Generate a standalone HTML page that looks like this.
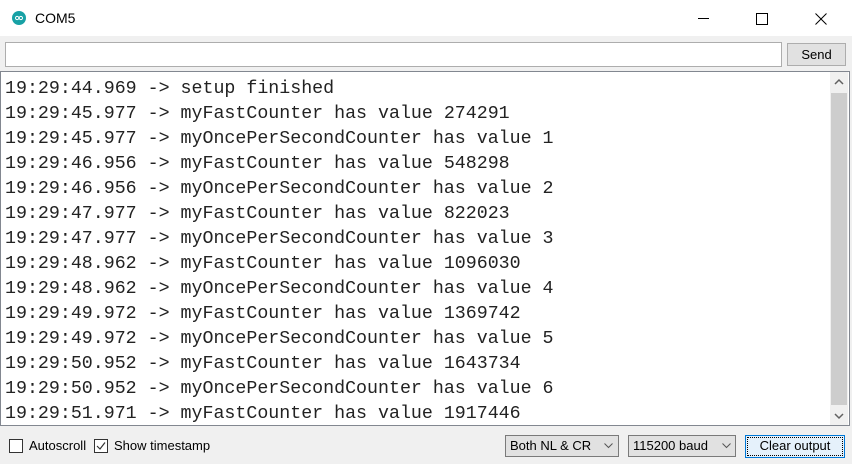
<!DOCTYPE html><html><head><style>
body{margin:0;width:852px;height:464px;overflow:hidden;background:#f0f0f0;font-family:"Liberation Sans",sans-serif;position:relative}
.a{position:absolute}
.t{left:0;top:0;width:852px;height:36px;background:#fff}
.out{left:0;top:71px;width:850px;height:355px;background:#fff;border:1px solid #828790;box-sizing:border-box}
pre{margin:0;position:absolute;left:5px;top:77px;font-family:"Liberation Mono",monospace;font-size:18.3px;line-height:25px;color:#222}
.sb{left:830px;top:72px;width:18px;height:353px;background:#f0f0f0}
.th{left:831px;top:93px;width:16px;height:312px;background:#cdcdcd}
.cb{width:14px;height:14px;border:1px solid #333;background:#fff;box-sizing:border-box}
.sel{height:22px;border:1px solid #7a7a7a;background:#e1e1e1;box-sizing:border-box;font-size:13px;line-height:20px;padding-left:4px}
</style></head><body>
<div class="a t"></div>
<svg class="a" style="left:12px;top:11px" width="14" height="14"><circle cx="7" cy="7" r="7" fill="#17a1a5"/><path d="M3.5 7a1.6 1.6 0 1 0 3.3 0a1.6 1.6 0 1 0-3.3 0M7.2 7a1.6 1.6 0 1 0 3.3 0a1.6 1.6 0 1 0-3.3 0" stroke="#fff" stroke-width="1" fill="none"/></svg>
<div class="a" style="left:35px;top:10px;font-size:14px">COM5</div>
<div class="a" style="left:698px;top:18px;width:11px;height:1px;background:#000"></div>
<div class="a" style="left:756px;top:13px;width:10px;height:10px;border:1px solid #000"></div>
<svg class="a" style="left:815px;top:13px" width="12" height="12"><path d="M0.5 0.5L11.5 11.5M11.5 0.5L0.5 11.5" stroke="#000"/></svg>
<div class="a" style="left:5px;top:42px;width:777px;height:25px;background:#fff;border:1px solid #adadad;box-sizing:border-box"></div>
<div class="a" style="left:787px;top:43px;width:59px;height:23px;background:#e1e1e1;border:1px solid #adadad;box-sizing:border-box;font-size:13px;text-align:center;line-height:21px">Send</div>
<div class="a out"></div>
<pre>19:29:44.969 -&gt; setup finished
19:29:45.977 -&gt; myFastCounter has value 274291
19:29:45.977 -&gt; myOncePerSecondCounter has value 1
19:29:46.956 -&gt; myFastCounter has value 548298
19:29:46.956 -&gt; myOncePerSecondCounter has value 2
19:29:47.977 -&gt; myFastCounter has value 822023
19:29:47.977 -&gt; myOncePerSecondCounter has value 3
19:29:48.962 -&gt; myFastCounter has value 1096030
19:29:48.962 -&gt; myOncePerSecondCounter has value 4
19:29:49.972 -&gt; myFastCounter has value 1369742
19:29:49.972 -&gt; myOncePerSecondCounter has value 5
19:29:50.952 -&gt; myFastCounter has value 1643734
19:29:50.952 -&gt; myOncePerSecondCounter has value 6
19:29:51.971 -&gt; myFastCounter has value 1917446</pre>
<div class="a sb"></div><div class="a th"></div>
<svg class="a" style="left:834px;top:78px" width="10" height="8"><path d="M1 6L5 2L9 6" stroke="#606060" stroke-width="1.5" fill="none"/></svg>
<svg class="a" style="left:834px;top:412px" width="10" height="8"><path d="M1 2L5 6L9 2" stroke="#606060" stroke-width="1.5" fill="none"/></svg>
<div class="a cb" style="left:9px;top:439px"></div>
<div class="a" style="left:29px;top:438px;font-size:13px">Autoscroll</div>
<div class="a cb" style="left:94px;top:439px"></div>
<svg class="a" style="left:96px;top:441px" width="10" height="10"><path d="M1 5L4 8L9 1.5" stroke="#333" stroke-width="1.2" fill="none"/></svg>
<div class="a" style="left:114px;top:438px;font-size:13px">Show timestamp</div>
<div class="a sel" style="left:505px;top:435px;width:114px">Both NL &amp; CR</div>
<div class="a sel" style="left:628px;top:435px;width:108px">115200 baud</div>
<svg class="a" style="left:604px;top:443px" width="9" height="6"><path d="M0.5 0.5L4.5 4.5L8.5 0.5" stroke="#555" fill="none"/></svg>
<svg class="a" style="left:722px;top:443px" width="9" height="6"><path d="M0.5 0.5L4.5 4.5L8.5 0.5" stroke="#555" fill="none"/></svg>
<div class="a" style="left:745px;top:435px;width:100px;height:23px;background:#e5f1fb;border:1px solid #0078d7;box-sizing:border-box;font-size:13px;text-align:center;line-height:20px"><div style="position:absolute;inset:1px;border:1px dotted #000"></div>Clear output</div>
</body></html>
